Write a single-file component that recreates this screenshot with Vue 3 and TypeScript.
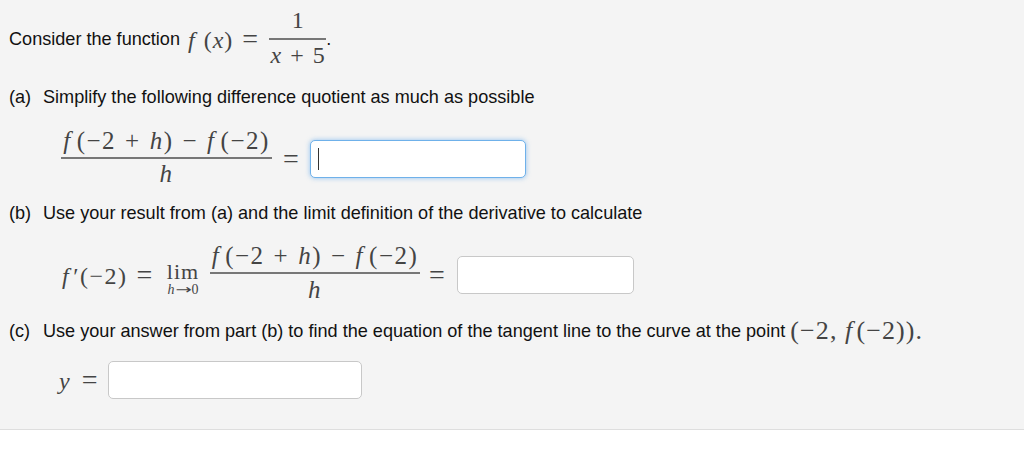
<script setup lang="ts">
const minus = '\u2212'
</script>

<template>
  <main class="panel">
    <div class="row row-intro">
      <span>Consider the function</span>
      <span class="math f-x"><i class="f">f</i><span class="gap">(</span><i>x</i>)<span class="rel">=</span></span>
      <span class="frac frac-intro">
        <span class="num">1</span>
        <span class="den"><i>x</i><span class="op">+</span>5</span>
      </span>
      <span class="dot">.</span>
    </div>

    <div class="row row-a"><span class="label">(a)</span><span>Simplify the following difference quotient as much as possible</span></div>

    <div class="row row-a-eq">
      <span class="frac frac-a">
        <span class="num"><i class="f">f</i>({{ minus }}2<span class="op">+</span><i>h</i>)<span class="op">{{ minus }}</span><i class="f">f</i>({{ minus }}2)</span>
        <span class="den"><i>h</i></span>
      </span>
      <span class="math rel eq">=</span>
      <span class="box box-a focused"><span class="caret"></span></span>
    </div>

    <div class="row row-b"><span class="label">(b)</span><span>Use your result from (a) and the limit definition of the derivative to calculate</span></div>

    <div class="row row-b-eq">
      <span class="math lhs"><i class="f">f</i>′({{ minus }}2)<span class="rel">=</span></span>
      <span class="lim math">
        <span class="lim-word">lim</span>
        <small><i>h</i><span class="arrow">→</span>0</small>
      </span>
      <span class="frac frac-b">
        <span class="num"><i class="f">f</i>({{ minus }}2<span class="op">+</span><i>h</i>)<span class="op">{{ minus }}</span><i class="f">f</i>({{ minus }}2)</span>
        <span class="den"><i>h</i></span>
      </span>
      <span class="math rel eq">=</span>
      <span class="box box-b"></span>
    </div>

    <div class="row row-c">
      <span class="label">(c)</span>
      <span>Use your answer from part (b) to find the equation of the tangent line to the curve at the point</span>
      <span class="math point">({{ minus }}2, <i class="f">f</i>({{ minus }}2)).</span>
    </div>

    <div class="row row-c-eq">
      <span class="math"><i>y</i><span class="rel">=</span></span>
      <span class="box box-c"></span>
    </div>
  </main>
</template>

<style>
html, body { margin: 0; background: #fff; }
</style>

<style scoped>
.panel {
  box-sizing: border-box;
  height: 430px;
  padding-left: 9px;
  background: #f4f4f4;
  border-bottom: 1px solid #dedede;
  font: 18.1px/22px "Liberation Sans", Arial, sans-serif;
  color: #111;
  overflow: hidden;
}
.row { display: flex; align-items: center; white-space: nowrap; }
.label { width: 34px; }
.math, .frac { font-family: "Liberation Serif", serif; font-size: 24px; color: #444; }
.f { margin-right: 3px; }
.gap { margin-left: 5px; }
.op { margin: 0 9px; }
.rel { font-size: 28px; line-height: 1; margin-left: 11px; }
.row-intro { height: 78px; }
.f-x { margin-left: 8px; letter-spacing: 1px; }
.f-x .rel { margin-left: 9px; letter-spacing: 0; }
.frac { display: inline-flex; flex-direction: column; align-items: center; }
.num { display: block; border-bottom: 2px solid #777; text-align: center; width: 100%; }
.den { display: block; text-align: center; }
.frac-intro { margin: 0 0 6px 11px; width: 57px; }
.frac-intro .num { line-height: 36px; }
.frac-intro .den { line-height: 30px; }
.row-a { height: 38px; }
.row-a-eq { height: 86px; padding-left: 52px; }
.frac-a, .frac-b { font-size: 25px; letter-spacing: 1.5px; }
.frac-a .f, .frac-b .f { margin-right: 5px; }
.frac-a { width: 211px; }
.frac-a .num { line-height: 28px; padding-bottom: 2px; }
.frac-a .den { line-height: 30px; padding-bottom: 2px; }
.eq { margin-left: 11px; }
.box {
  box-sizing: border-box;
  display: block;
  height: 38px;
  background: #fff;
  border: 1px solid #c8c8c8;
  border-radius: 5px;
}
.box-a { width: 216px; margin-left: 11px; display: flex; align-items: center; padding-left: 7px; }
.focused { border-color: #6fb1ea; box-shadow: 0 0 5px rgba(90, 165, 235, .65); }
.caret { width: 1px; height: 22px; background: #333; }
.row-b { height: 22px; margin-bottom: 11px; }
.row-b-eq { height: 80px; padding-left: 53px; }
.lhs { width: 103px; letter-spacing: 1.5px; }
.lhs .rel { margin-left: 9px; letter-spacing: 0; }
.lim { width: 36px; display: inline-flex; flex-direction: column; align-items: center; padding-top: 8px; }
.lim-word { font-size: 22px; line-height: 21px; letter-spacing: 1px; }
.lim small { font-size: 14px; line-height: 16px; white-space: nowrap; }
.arrow { display: inline-block; font-family: "DejaVu Sans", sans-serif; font-size: 13px; line-height: 1; margin: 0 3px; transform: scaleX(1.5); }
.frac-b { width: 210px; margin-left: 9px; }
.frac-b .num { line-height: 28px; padding-bottom: 2px; }
.frac-b .den { line-height: 32px; padding-bottom: 2px; }
.frac-b + .eq { margin-left: 9px; }
.box-b { width: 177px; margin-left: 12px; }
.row-c { height: 32px; }
.point { font-size: 26px; margin-left: 5px; letter-spacing: 1.1px; }
.row-c-eq { height: 66px; padding-left: 50px; }
.row-c-eq .rel { margin-left: 12px; }
.box-c { width: 254px; margin-left: 11px; }
</style>
